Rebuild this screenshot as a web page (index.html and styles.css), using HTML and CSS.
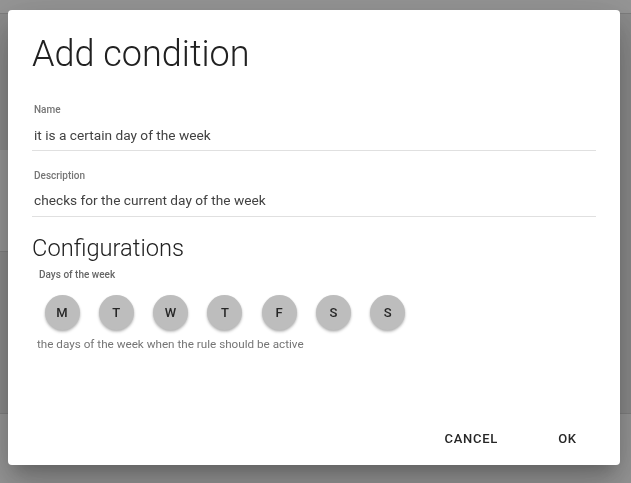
FILE: index.html
```html
<!DOCTYPE html>
<html lang="en">
<head>
<meta charset="utf-8">
<title>Add condition</title>
<link rel="stylesheet" href="styles.css">
</head>
<body>
<div class="page">
  <div class="page-header"></div>
  <div class="page-body">
    <div class="page-card"></div>
    <div class="page-spacer"></div>
    <div class="page-footer"></div>
  </div>
</div>

<div class="overlay">
  <div class="dialog" role="dialog" aria-labelledby="dlg-title">
    <h1 class="dialog-title" id="dlg-title">Add condition</h1>

    <div class="field">
      <div class="field-label">Name</div>
      <div class="field-value">it is a certain day of the week</div>
    </div>

    <div class="field field-second">
      <div class="field-label">Description</div>
      <div class="field-value">checks for the current day of the week</div>
    </div>

    <h2 class="section-title">Configurations</h2>
    <div class="config-label">Days of the week</div>
    <div class="days">
      <button class="day">M</button>
      <button class="day">T</button>
      <button class="day">W</button>
      <button class="day">T</button>
      <button class="day">F</button>
      <button class="day">S</button>
      <button class="day">S</button>
    </div>
    <div class="helper">the days of the week when the rule should be active</div>

    <div class="actions">
      <button class="btn">CANCEL</button>
      <button class="btn">OK</button>
    </div>
  </div>
</div>
</body>
</html>
```

FILE: styles.css
```css
* { box-sizing: border-box; }

html, body {
  margin: 0;
  padding: 0;
  height: 100%;
}

body {
  font-family: Roboto, "Noto Sans", "Liberation Sans", sans-serif;
  background: #e8e8e8;
  overflow: hidden;
}

/* underlying page (dimmed by overlay) */
.page {
  height: 100%;
  display: flex;
  flex-direction: column;
}
.page-header {
  height: 14px;
  background: #fafafa;
  border-bottom: 1px solid #d0d0d0;
}
.page-body {
  flex: 1;
  display: flex;
  flex-direction: column;
}
.page-card {
  margin-top: 136px;
  width: 300px;
  height: 102px;
  background: #fbfbfb;
  border-bottom: 1px solid #d6d6d6;
}
.page-spacer {
  height: 161px;
}
.page-footer {
  flex: 1;
  background: #fbfbfb;
  border-top: 1px solid #d6d6d6;
}

/* modal overlay */
.overlay {
  position: fixed;
  inset: 0;
  background: rgba(0, 0, 0, 0.4);
  padding: 10px 0 0 8px;
}

.dialog {
  width: 612px;
  height: 455px;
  background: #fff;
  border-radius: 4px;
  padding: 22.7px 24px 8px 24px;
  display: flex;
  flex-direction: column;
  box-shadow: 0 11px 15px -7px rgba(0,0,0,.2),
              0 24px 38px 3px rgba(0,0,0,.14),
              0 9px 46px 8px rgba(0,0,0,.12);
}

.dialog-title {
  margin: 0;
  font-size: 36px;
  line-height: 42px;
  font-weight: 300;
  color: #212121;
}

.field {
  margin-top: 29.2px;
}
.field-second {
  margin-top: 18.6px;
}
.field-label {
  font-size: 10px;
  line-height: 12px;
  font-weight: 500;
  color: #757575;
  padding-left: 2px;
}
.field-value {
  margin-top: 8.7px;
  font-size: 13.7px;
  line-height: 20px;
  color: #424242;
  padding: 0 0 5.4px 2px;
  border-bottom: 1px solid #e0e0e0;
}

.section-title {
  margin: 17.3px 0 0 0;
  font-size: 23.7px;
  line-height: 28px;
  font-weight: 300;
  color: #212121;
}

.config-label {
  margin-top: 7.5px;
  padding-left: 7px;
  font-size: 10px;
  line-height: 12px;
  font-weight: 500;
  color: #666;
}

.days {
  margin-top: 13.1px;
  padding-left: 12.5px;
  display: flex;
  gap: 19.3px;
}
.day {
  width: 35px;
  height: 35px;
  border-radius: 50%;
  border: none;
  padding: 0;
  background: #bdbdbd;
  color: #262626;
  font-family: inherit;
  font-size: 13px;
  font-weight: 500;
  display: flex;
  align-items: center;
  justify-content: center;
  box-shadow: 0 2px 3px rgba(0,0,0,.22), 0 1px 2px rgba(0,0,0,.12);
}

.helper {
  margin-top: 6.5px;
  padding-left: 5px;
  font-size: 11.7px;
  line-height: 16px;
  color: #757575;
}

.actions {
  margin-top: auto;
  margin-bottom: 1px;
  display: flex;
  justify-content: flex-end;
  gap: 21.5px;
  margin-right: -3.5px;
}
.btn {
  height: 36px;
  min-width: 64px;
  padding: 0 16px;
  border: none;
  background: transparent;
  font-family: inherit;
  font-size: 13px;
  font-weight: 500;
  letter-spacing: 0.7px;
  color: #262626;
  display: flex;
  align-items: center;
  justify-content: center;
}
```
